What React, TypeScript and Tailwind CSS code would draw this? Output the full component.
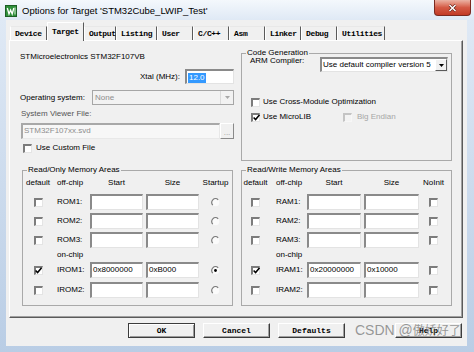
import React from "react";

const MONO = "font-['Liberation_Mono',monospace]";

function Check({ checked = false, disabled = false }: { checked?: boolean; disabled?: boolean }) {
  return (
    <span
      className={
        disabled
          ? "relative flex w-[9px] h-[9px] bg-[#f3f3f3] border-t-2 border-l-2 border-b border-r border-t-[#c4c4c4] border-l-[#c4c4c4] border-b-[#f7f7f7] border-r-[#f7f7f7]"
          : "relative flex w-[9px] h-[9px] bg-white border-t-2 border-l-2 border-b border-r border-t-[#7c7c7c] border-l-[#7c7c7c] border-b-[#e4e4e4] border-r-[#e4e4e4]"
      }
    >
      {checked && (
        <svg width="7" height="7" viewBox="0 0 7 7" className="absolute -left-[0.5px] -top-[0.5px]">
          <path d="M0.6 3.4 L2.6 5.6 L6.6 0.8" stroke="#000" strokeWidth="1.5" fill="none" />
        </svg>
      )}
    </span>
  );
}

function Radio({ on = false }: { on?: boolean }) {
  return (
    <svg width="9" height="9" viewBox="0 0 9 9">
      <circle cx="4.5" cy="4.5" r="3.8" fill="#fbfbfb" />
      <path d="M7.2 1.8 A3.8 3.8 0 0 0 1.8 7.2" stroke="#7a7a7a" strokeWidth="1.2" fill="none" />
      {on && <circle cx="4.5" cy="4.5" r="1.4" fill="#000" />}
    </svg>
  );
}

function Field({ className = "", value = "" }: { className?: string; value?: string }) {
  return (
    <div
      className={`h-[16px] bg-white border-t-2 border-l-2 border-b border-r border-t-[#8a8a8a] border-l-[#8a8a8a] border-b-[#e3e3e3] border-r-[#e3e3e3] text-[8px] leading-[11px] pl-[1px] text-black whitespace-nowrap overflow-hidden ${className}`}
    >
      {value}
    </div>
  );
}

function Btn({ label, className = "", def = false }: { label: string; className?: string; def?: boolean }) {
  return (
    <div
      className={`h-[15px] flex items-center justify-center bg-[#f0f0f0] text-[8px] font-bold text-black ${MONO} ${
        def
          ? "border border-[#3c3c3c] shadow-[inset_1px_1px_0_#ffffff,inset_-1px_-1px_0_#9a9a9a]"
          : "border border-white border-b-[#3c3c3c] border-r-[#3c3c3c] shadow-[inset_-1px_-1px_0_#a0a0a0]"
      } ${className}`}
    >
      {label}
    </div>
  );
}

const LEFT = ["w-[30px]", "w-[37px] pl-[4px]", "w-[54px]", "w-[55px] pl-[2px]", "w-[33px]", "w-[53px]", "w-[53px]"];
const RIGHT = ["w-[27px]", "w-[38px] pl-[7px]", "w-[55px]", "w-[58px] pl-[2px]", "w-[27px]", "w-[54px]", "w-[55px]"];

function Header({ c, last }: { c: string[]; last: string }) {
  return (
    <div className="mt-[4px] flex h-[10px] leading-[10px] whitespace-nowrap">
      <span className={`${c[0]} text-center`}>default</span>
      <span className={c[1]}>off-chip</span>
      <span className={`${c[2]} flex`}>
        <span className={`${c[5]} text-center`}>Start</span>
      </span>
      <span className={`${c[3]} flex`}>
        <span className={`${c[6]} text-center`}>Size</span>
      </span>
      <span className={`${c[4]} text-center`}>{last}</span>
    </div>
  );
}

function MemRow({
  c,
  label,
  checked = false,
  start = "",
  size = "",
  right,
  className = "",
}: {
  c: string[];
  label: string;
  checked?: boolean;
  start?: string;
  size?: string;
  right: React.ReactNode;
  className?: string;
}) {
  return (
    <div className={`flex items-center h-[16px] ${className}`}>
      <span className={`${c[0]} flex justify-center`}>
        <Check checked={checked} />
      </span>
      <span className={`${c[1]} whitespace-nowrap leading-[10px]`}>{label}</span>
      <span className={c[2]}>
        <Field className={c[5]} value={start} />
      </span>
      <span className={c[3]}>
        <Field className={c[6]} value={size} />
      </span>
      <span className={`${c[4]} flex justify-center`}>{right}</span>
    </div>
  );
}

function TitleBar() {
  return (
    <div className="h-[20px] flex items-start bg-gradient-to-b from-[#f4f8fc] to-[#dfe9f5]">
      <svg width="12" height="12" viewBox="0 0 12 12" className="ml-[5px] mt-[5px]">
        <rect x="0.5" y="0.5" width="11" height="11" fill="#2f8f3a" stroke="#1b5e24" />
        <path d="M2.3 3 L4 9 L5.6 5 L7.2 9 L8.8 3" stroke="#fff" strokeWidth="1.3" fill="none" />
        <path d="M10 2.5 V9.5" stroke="#d8f0d8" strokeWidth="1" />
      </svg>
      <span className="ml-[5px] mt-[5px] text-[9.5px] leading-[12px] text-black whitespace-nowrap">
        Options for Target 'STM32Cube_LWIP_Test'
      </span>
      <div className="flex-1" />
      <div className="mr-[3px] w-[37px] h-[16px] rounded-b-[4px] border border-t-0 border-[#7a2a20] bg-gradient-to-b from-[#eab2a4] via-[#d45a45] to-[#c23a25] flex items-center justify-center">
        <svg width="9" height="8" viewBox="0 0 9 8">
          <path d="M1.5 1 L7.5 7 M7.5 1 L1.5 7" stroke="#5a1a12" strokeWidth="2.6" />
          <path d="M1.5 1 L7.5 7 M7.5 1 L1.5 7" stroke="#ffffff" strokeWidth="1.5" />
        </svg>
      </div>
    </div>
  );
}

const TABS: [string, string][] = [
  ["Device", "w-[37px]"],
  ["Target", "w-[37px]"],
  ["Output", "w-[32px]"],
  ["Listing", "w-[41px]"],
  ["User", "w-[36px]"],
  ["C/C++", "w-[36px]"],
  ["Asm", "w-[36px]"],
  ["Linker", "w-[36px]"],
  ["Debug", "w-[36px]"],
  ["Utilities", "w-[48px]"],
];

function Tabs() {
  return (
    <div className="h-[20px] flex items-end pl-[4px] relative z-10">
      {TABS.map(([t, w]) =>
        t === "Target" ? (
          <div
            key={t}
            className={`${w} h-[19px] -mb-[1px] bg-[#f0f0f0] border-t border-l border-white border-r border-r-[#5a5a5a] pl-[4px] pt-[4px] text-[8px] leading-[10px] font-bold tracking-[-0.35px] ${MONO}`}
          >
            {t}
          </div>
        ) : (
          <div
            key={t}
            className={`${w} h-[14px] border-t border-t-[#e8e8e8] border-l border-l-white border-r border-r-[#5a5a5a] pl-[4px] pt-[2px] text-[8px] leading-[10px] font-bold tracking-[-0.35px] ${MONO}`}
          >
            {t}
          </div>
        )
      )}
    </div>
  );
}

function Panel() {
  return (
    <div className="ml-[3px] w-[454px] h-[278px] border border-white border-b-[#5a5a5a] border-r-[#5a5a5a] shadow-[inset_-1px_-1px_0_#a0a0a0] flex flex-col text-[8px]">
      {/* top section */}
      <div className="flex h-[120px]">
        <div className="ml-[10px] w-[214px] flex flex-col">
          <div className="mt-[11px] leading-[10px] whitespace-nowrap">STMicroelectronics STM32F107VB</div>
          <div className="mt-[7px] flex items-center justify-end">
            <span className="mr-[5px] leading-[10px]">Xtal (MHz):</span>
            <div className="w-[49px] h-[15px] bg-white border-t-2 border-l-2 border-b border-r border-t-[#8a8a8a] border-l-[#8a8a8a] border-b-[#e3e3e3] border-r-[#e3e3e3] pl-[1px] pt-[1px]">
              <span className="bg-[#3399ff] text-white leading-[10px] inline-block px-[1px]">12.0</span>
            </div>
          </div>
          <div className="mt-[6px] flex items-center justify-between">
            <span className="leading-[10px]">Operating system:</span>
            <div className="w-[142px] h-[15px] flex border border-[#a6a6a6] bg-[#f2f2f2]">
              <span className="flex-1 pl-[2px] leading-[13px] text-[#8d8d8d]">None</span>
              <span className="w-[13px] flex items-center justify-center border-l border-[#dadada]">
                <svg width="5" height="3" viewBox="0 0 5 3">
                  <path d="M0 0H5L2.5 3Z" fill="#a8a8a8" />
                </svg>
              </span>
            </div>
          </div>
          <div className="mt-[4px] pl-[1px] leading-[10px] text-[#555555]">System Viewer File:</div>
          <div className="mt-[4px] flex pl-[1px]">
            <div className="w-[199px] h-[16px] bg-[#f7f7f7] border-t-2 border-l-2 border-b border-r border-t-[#a8a8a8] border-l-[#a8a8a8] border-b-[#e8e8e8] border-r-[#e8e8e8] pl-[1px] leading-[12px] text-[#8d8d8d]">
              STM32F107xx.svd
            </div>
            <div className="w-[14px] h-[16px] border border-white border-b-[#8a8a8a] border-r-[#8a8a8a] bg-[#f0f0f0] flex items-end justify-center leading-[10px] text-[#9a9a9a]">
              ...
            </div>
          </div>
          <div className="mt-[4px] flex items-center h-[10px] pl-[3px]">
            <Check />
            <span className="ml-[4px] leading-[10px]">Use Custom File</span>
          </div>
        </div>
        <fieldset className="ml-[7px] mt-[8px] w-[211px] h-[112px] border border-[#a9a9a9]">
          <legend className="ml-[4px] px-[1px] leading-[8px]">Code Generation</legend>
          <div className="pl-[8px] flex flex-col">
            <div className="flex items-start">
              <span className="w-[70px] -mt-[1px] leading-[9px] whitespace-nowrap">ARM Compiler:</span>
              <div className="w-[128px] h-[15px] flex bg-white border-t-2 border-l-2 border-b border-r border-t-[#8a8a8a] border-l-[#8a8a8a] border-b-[#e3e3e3] border-r-[#e3e3e3]">
                <span className="flex-1 pl-[1px] leading-[12px] whitespace-nowrap">Use default compiler version 5</span>
                <span className="w-[12px] h-full flex items-center justify-center bg-[#f0f0f0] border border-white border-b-[#5a5a5a] border-r-[#5a5a5a]">
                  <svg width="5" height="3" viewBox="0 0 5 3">
                    <path d="M0 0H5L2.5 3Z" fill="#000" />
                  </svg>
                </span>
              </div>
            </div>
            <div className="mt-[25px] flex items-center h-[10px] pl-[1px]">
              <Check />
              <span className="ml-[3px] leading-[10px] whitespace-nowrap">Use Cross-Module Optimization</span>
            </div>
            <div className="mt-[5px] flex items-center h-[10px] pl-[1px]">
              <Check checked />
              <span className="ml-[3px] w-[80px] leading-[10px]">Use MicroLIB</span>
              <Check disabled />
              <span className="ml-[5px] leading-[10px] text-[#a6a6a6]">Big Endian</span>
            </div>
          </div>
        </fieldset>
      </div>
      {/* bottom section */}
      <div className="mt-[5px] flex">
        <fieldset className="ml-[12px] w-[211px] h-[140px] border border-[#a9a9a9]">
          <legend className="ml-[4px] px-[1px] leading-[8px]">Read/Only Memory Areas</legend>
          <Header c={LEFT} last="Startup" />
          <MemRow c={LEFT} className="mt-[6px]" label="ROM1:" right={<Radio />} />
          <MemRow c={LEFT} className="mt-[3px]" label="ROM2:" right={<Radio />} />
          <MemRow c={LEFT} className="mt-[3px]" label="ROM3:" right={<Radio />} />
          <div className="mt-[2px] h-[10px] leading-[10px] pl-[34px]">on-chip</div>
          <MemRow c={LEFT} className="mt-[2px]" label="IROM1:" checked start="0x8000000" size="0xB000" right={<Radio on />} />
          <MemRow c={LEFT} className="mt-[4px]" label="IROM2:" right={<Radio />} />
        </fieldset>
        <fieldset className="ml-[8px] w-[211px] h-[140px] border border-[#a9a9a9]">
          <legend className="ml-[4px] px-[1px] leading-[8px]">Read/Write Memory Areas</legend>
          <Header c={RIGHT} last="NoInit" />
          <MemRow c={RIGHT} className="mt-[6px]" label="RAM1:" right={<Check />} />
          <MemRow c={RIGHT} className="mt-[3px]" label="RAM2:" right={<Check />} />
          <MemRow c={RIGHT} className="mt-[3px]" label="RAM3:" right={<Check />} />
          <div className="mt-[2px] h-[10px] leading-[10px] pl-[34px]">on-chip</div>
          <MemRow c={RIGHT} className="mt-[2px]" label="IRAM1:" checked start="0x20000000" size="0x10000" right={<Check />} />
          <MemRow c={RIGHT} className="mt-[4px]" label="IRAM2:" right={<Check />} />
        </fieldset>
      </div>
    </div>
  );
}

function Buttons() {
  return (
    <div className="mt-[5px] flex">
      <Btn label="OK" def className="ml-[122px] w-[67px]" />
      <Btn label="Cancel" className="ml-[8px] w-[67px]" />
      <Btn label="Defaults" className="ml-[8px] w-[67px]" />
      <Btn label="Help" className="ml-[50px] w-[67px]" />
    </div>
  );
}

export default function App() {
  return (
    <div className="relative w-[474px] h-[352px] overflow-hidden flex flex-col bg-[#c9d9ec] font-['Liberation_Sans',Arial,sans-serif] text-black">
      <TitleBar />
      <div className="flex-1 flex pl-[6px] pr-[7px] pb-[6px] bg-gradient-to-b from-[#dfe9f5] to-[#b9cde5]">
        <div className="w-[461px] bg-[#f0f0f0] flex flex-col">
          <Tabs />
          <Panel />
          <Buttons />
        </div>
      </div>
      <div className="absolute left-[355px] top-[322px] flex items-baseline whitespace-nowrap text-[#6e6e6e]/70 font-['Liberation_Sans','Noto_Sans_CJK_SC',sans-serif]">
        <span className="text-[14px] leading-[17px]">CSDN @</span>
        <span className="text-[12px] leading-[17px]">傲娇好了</span>
      </div>
    </div>
  );
}
